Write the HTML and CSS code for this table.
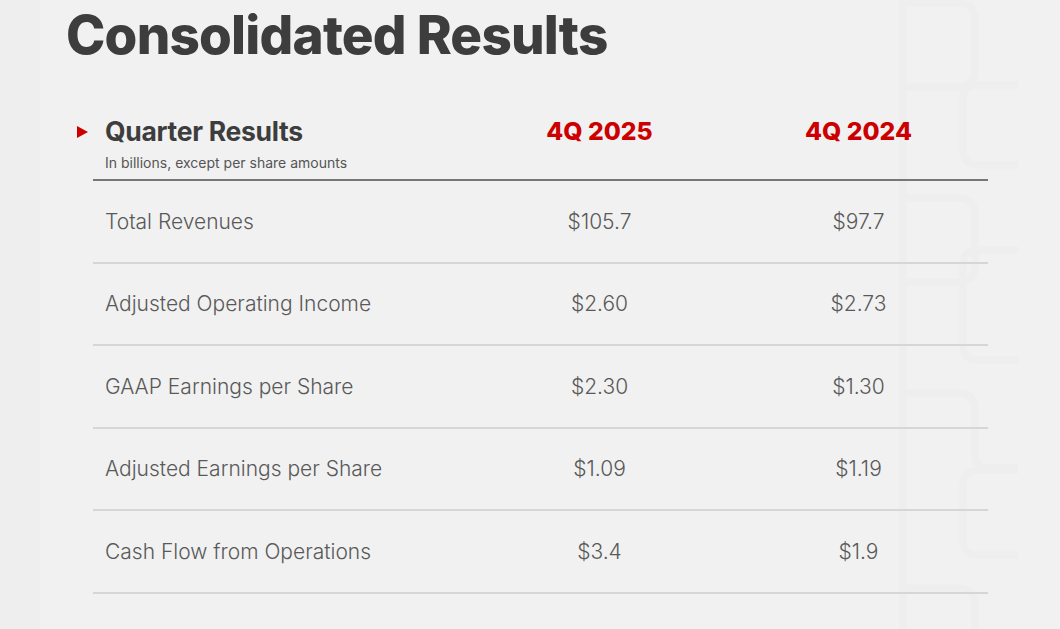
FILE: index.html
```html
<!DOCTYPE html>
<html lang="en">
<head>
<meta charset="utf-8">
<title>Consolidated Results</title>
<link rel="stylesheet" href="styles.css">
</head>
<body>
<div class="page">
  <div class="gutter"></div>
  <main class="panel">
    <svg class="deco" width="160" height="629" viewBox="0 0 160 629" aria-hidden="true">
      <g fill="none" stroke="#eeeeee" stroke-width="7">
        <path d="M5,0 V629"/>
        <path d="M5,3 H60 Q77,3 77,20 V70 Q77,87 60,87 H5"/>
        <path d="M5,198 H60 Q77,198 77,215 V265 Q77,282 60,282 H5"/>
        <path d="M5,393 H60 Q77,393 77,410 V455 Q77,468 92,468 H120"/>
        <path d="M5,588 H60 Q77,588 77,605 V629"/>
        <path d="M120,85 H80 Q65,85 65,100 V150 Q65,165 80,165 H120"/>
        <path d="M120,250 H80 Q65,250 65,265 V345 Q65,360 80,360 H120"/>
        <path d="M120,470 H80 Q65,470 65,485 V540 Q65,555 80,555 H120"/>
      </g>
    </svg>
    <h1 class="title">Consolidated Results</h1>
    <section class="results">
      <div class="head">
        <div class="head-label">
          <span class="marker"></span>
          <h2>Quarter Results</h2>
          <p class="note">In billions, except per share amounts</p>
        </div>
        <div class="head-col">4Q 2025</div>
        <div class="head-col">4Q 2024</div>
      </div>
      <div class="row">
        <div class="label">Total Revenues</div>
        <div class="val">$105.7</div>
        <div class="val">$97.7</div>
      </div>
      <div class="row">
        <div class="label">Adjusted Operating Income</div>
        <div class="val">$2.60</div>
        <div class="val">$2.73</div>
      </div>
      <div class="row">
        <div class="label">GAAP Earnings per Share</div>
        <div class="val">$2.30</div>
        <div class="val">$1.30</div>
      </div>
      <div class="row">
        <div class="label">Adjusted Earnings per Share</div>
        <div class="val">$1.09</div>
        <div class="val">$1.19</div>
      </div>
      <div class="row">
        <div class="label">Cash Flow from Operations</div>
        <div class="val">$3.4</div>
        <div class="val">$1.9</div>
      </div>
    </section>
  </main>
</div>
</body>
</html>
```

FILE: styles.css
```css
* { box-sizing: border-box; }
html, body { margin: 0; padding: 0; }
body {
  background: #efefef;
  font-family: Inter, "Liberation Sans", sans-serif;
  color: #555;
  overflow: hidden;
}
.page {
  display: flex;
  min-height: 629px;
}
.gutter {
  width: 40px;
  flex: none;
  background: #eeeeee;
}
.panel {
  flex: 1;
  position: relative;
  background: #f1f1f1;
  padding-left: 26px;
  padding-top: 8px;
}
.deco {
  position: absolute;
  right: 0;
  top: 0;
  left: 858px;
}
.title {
  position: relative;
  margin: 0;
  font-size: 53px;
  line-height: 55px;
  font-weight: 800;
  letter-spacing: -0.8px;
  color: #3d3d3d;
}
.results {
  position: relative;
  margin-left: 27px;
  margin-top: 51px;
  width: 895px;
}
.head, .row {
  display: grid;
  grid-template-columns: 377px 259px 259px;
}
.head {
  border-bottom: 2px solid #777;
  height: 67px;
  align-items: start;
}
.head-label {
  position: relative;
  padding-left: 12px;
}
.marker {
  position: absolute;
  left: -16px;
  top: 12px;
  width: 0;
  height: 0;
  border-top: 6px solid transparent;
  border-bottom: 6px solid transparent;
  border-left: 11px solid #cc0000;
}
.head-label h2 {
  margin: 0;
  font-size: 26.5px;
  line-height: 35px;
  font-weight: 700;
  color: #3d3d3d;
  letter-spacing: -0.3px;
}
.note {
  margin: 5px 0 0;
  font-size: 14px;
  line-height: 17px;
  color: #555;
}
.head-col {
  text-align: center;
  font-size: 24.7px;
  line-height: 35px;
  font-weight: 800;
  color: #cc0000;
}
.row {
  height: 82.5px;
  border-bottom: 2px solid #d6d6d6;
  align-items: center;
  font-size: 21px;
  font-weight: 300;
  color: #595959;
}
.label { padding-left: 12px; }
.val { text-align: center; }
```
